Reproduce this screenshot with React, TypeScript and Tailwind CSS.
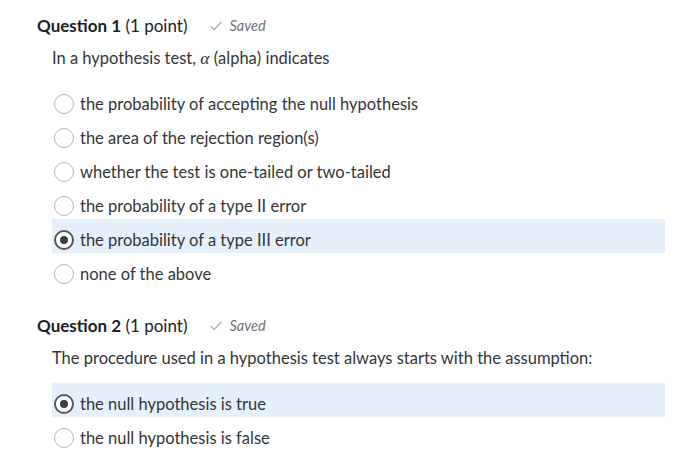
import { useState } from 'react'

type Question = {
  num: number
  prompt: React.ReactNode
  options: string[]
  picked: number
}

const questions: Question[] = [
  {
    num: 1,
    prompt: (
      <>
        In a hypothesis test, <i className="font-['Liberation_Serif',serif] text-[17.5px]">α</i> (alpha) indicates
      </>
    ),
    options: [
      'the probability of accepting the null hypothesis',
      'the area of the rejection region(s)',
      'whether the test is one-tailed or two-tailed',
      'the probability of a type II error',
      'the probability of a type III error',
      'none of the above',
    ],
    picked: 4,
  },
  {
    num: 2,
    prompt: 'The procedure used in a hypothesis test always starts with the assumption:',
    options: ['the null hypothesis is true', 'the null hypothesis is false'],
    picked: 0,
  },
]

function Radio({ on }: { on: boolean }) {
  return (
    <span
      className={
        on
          ? 'flex h-5 w-5 shrink-0 items-center justify-center rounded-full border-2 border-[#56595c] bg-white'
          : 'flex h-5 w-5 shrink-0 items-center justify-center rounded-full border border-[#b5b8ba] bg-white'
      }
    >
      {on && <span className="h-2 w-2 rounded-full bg-[#3a3d40]" />}
    </span>
  )
}

function QuestionBlock({ q }: { q: Question }) {
  const [picked, setPicked] = useState(q.picked)
  return (
    <section>
      <div className="mt-[2px] flex h-6 items-center">
        <h2 className="text-[17px] text-[#202122]">
          <span className="font-bold">Question {q.num}</span> (1 point)
        </h2>
        <span className="ml-[23px] flex items-center gap-[7px] text-[14.5px] italic text-[#6e7376]">
          <svg width="12" height="10" viewBox="0 0 12 10" fill="none">
            <path d="M1 5.5 L4.2 8.6 L11 1.2" stroke="#a9adb0" strokeWidth="1.3" strokeLinecap="round" />
          </svg>
          Saved
        </span>
      </div>
      <p className="ml-[15px] mt-[8px] h-6 text-[16.5px] leading-6 text-[#333638]">{q.prompt}</p>
      <div className="ml-[15px] mr-[35px] mt-[13px]">
        {q.options.map((opt, i) => (
          <label
            key={opt}
            onClick={() => setPicked(i)}
            className={
              i === picked
                ? 'flex h-[34px] cursor-pointer items-center gap-[6px] bg-[#e5f0fb] pl-[2px] pt-2'
                : 'flex h-[34px] cursor-pointer items-center gap-[6px] pl-[2px] pt-2'
            }
          >
            <Radio on={i === picked} />
            <span className="text-[16.5px] text-[#333638]">{opt}</span>
          </label>
        ))}
      </div>
    </section>
  )
}

export default function App() {
  return (
    <div className="h-[458px] w-[700px] bg-white pl-[37px] pt-[12px] font-['Lato',sans-serif]">
      <QuestionBlock q={questions[0]} />
      <div className="mt-[27px]">
        <QuestionBlock q={questions[1]} />
      </div>
    </div>
  )
}
